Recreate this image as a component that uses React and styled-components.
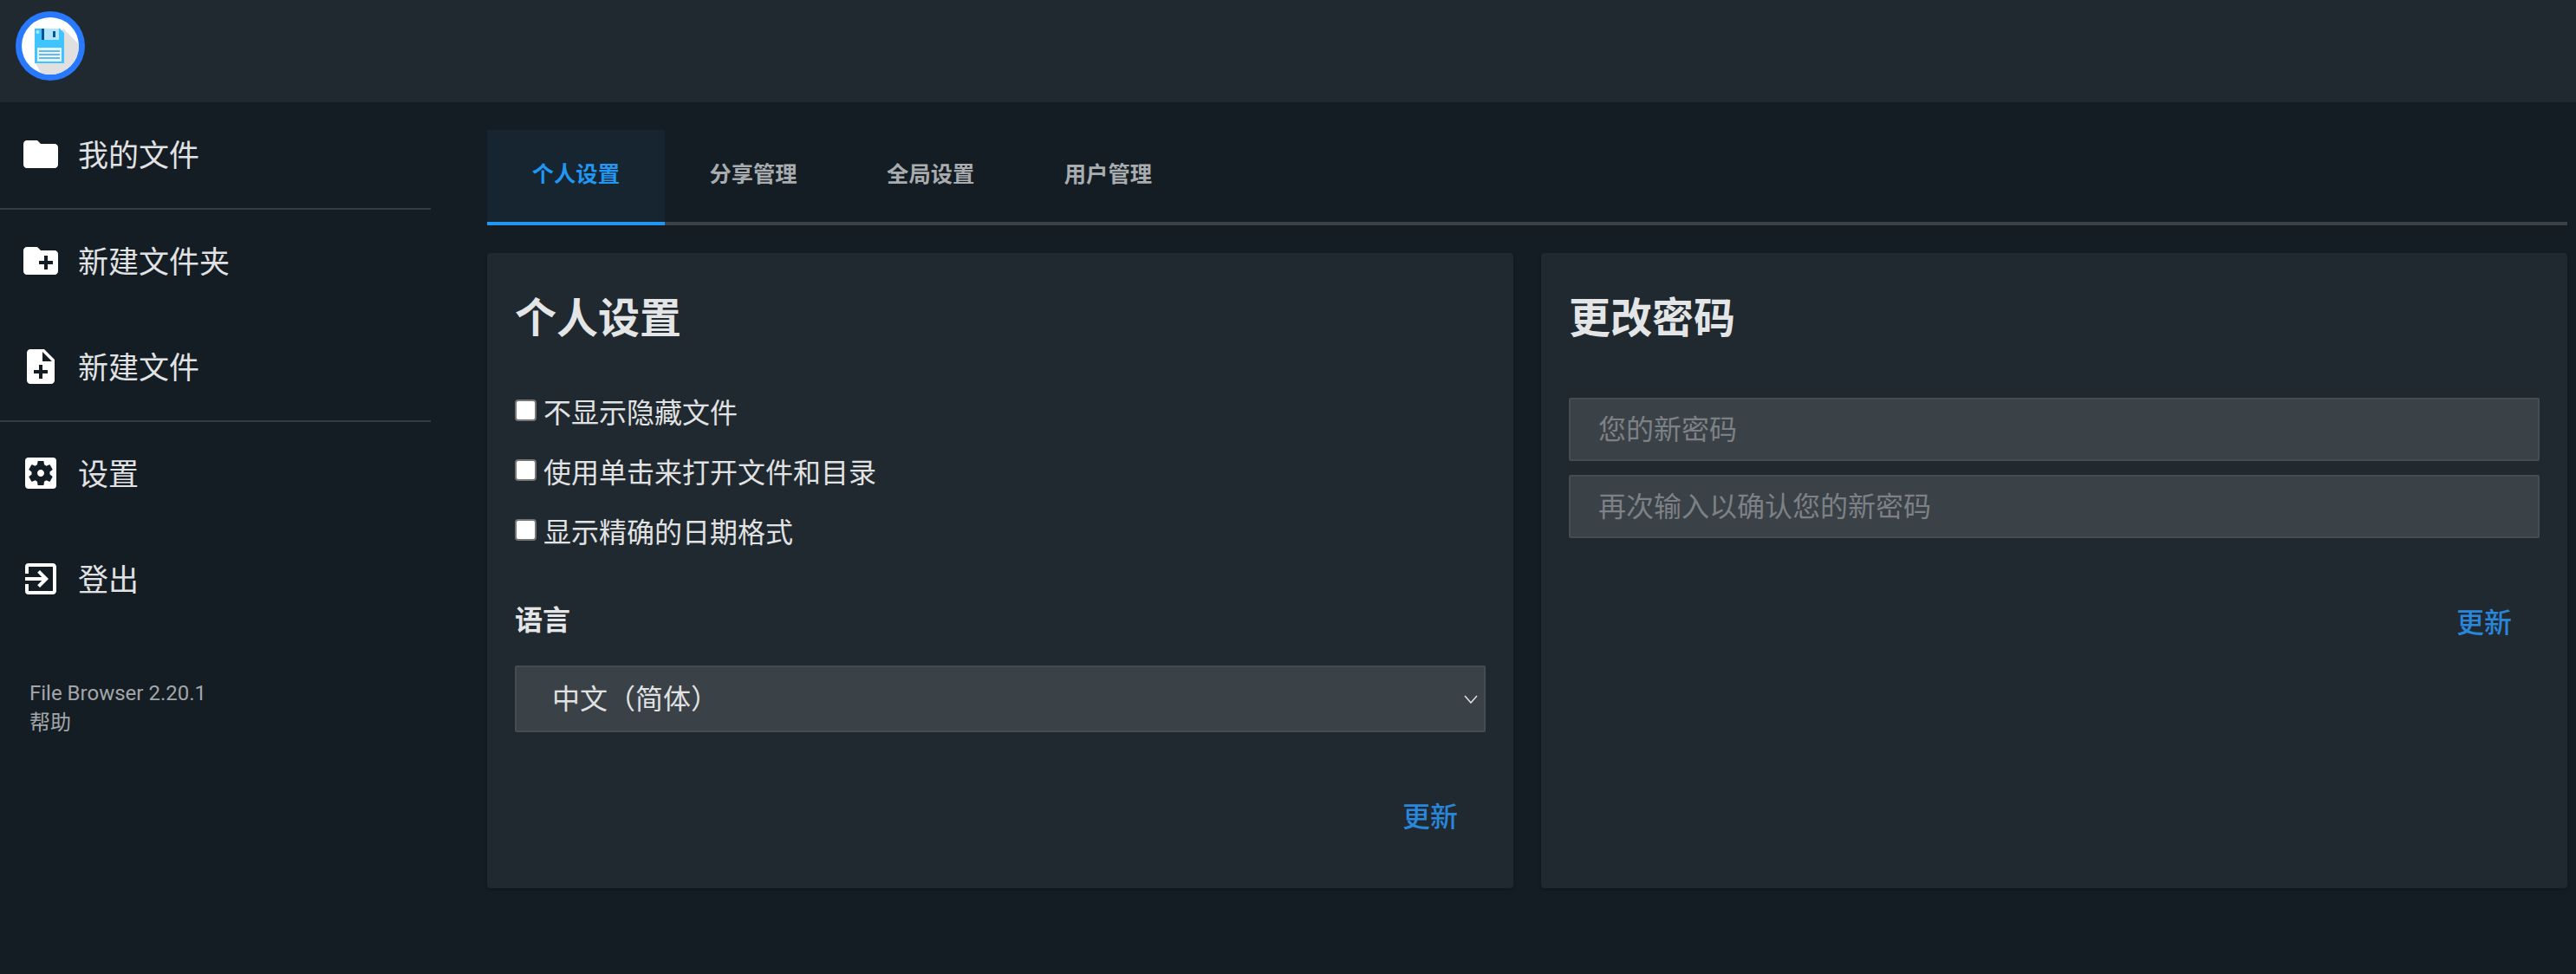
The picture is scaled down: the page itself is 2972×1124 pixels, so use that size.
import styled, { createGlobalStyle } from "styled-components";
import {
  MdFolder,
  MdCreateNewFolder,
  MdNoteAdd,
  MdSettingsApplications,
  MdExitToApp,
} from "react-icons/md";

const FONT = `Roboto, "Noto Sans CJK SC", sans-serif`;

const GlobalStyle = createGlobalStyle`
  html, body {
    margin: 0;
    background: #141d24;
    overflow: hidden;
  }
  * {
    box-sizing: border-box;
  }
`;

const Page = styled.div`
  width: 2972px;
  height: 1124px;
  background: #141d24;
  font-family: ${FONT};
  overflow: hidden;
`;

const Header = styled.header`
  height: 118px;
  background: #20292f;
  padding: 12px 0 0 17px;
`;

const Body = styled.div`
  display: flex;
`;

const Sidebar = styled.nav`
  width: 497px;
  flex-shrink: 0;
`;

const NavItem = styled.div`
  height: 122px;
  padding: 0 0 2px 23px;
  display: flex;
  align-items: center;
  gap: 19px;
  color: #e1e2e3;
  font-size: 35px;
  svg {
    flex-shrink: 0;
    color: #fff;
  }
`;

const NavLabel = styled.span`
  padding-bottom: 4px;
`;

const Divider = styled.hr`
  margin: 0 0 -1px;
  border: 0;
  height: 2px;
  background: #343b41;
`;

const Footer = styled.div`
  padding: 53px 0 0 34px;
  color: #a3a6a9;
  font-size: 24px;
  line-height: 34px;
`;

const Main = styled.main`
  flex: 1;
  padding: 32px 10px 0 65px;
`;

const Tabs = styled.div`
  display: flex;
  height: 110px;
  border-bottom: 4px solid #3a4147;
`;

const Tab = styled.div`
  width: 204.7px;
  height: 110px;
  padding-bottom: 8px;
  display: flex;
  align-items: center;
  justify-content: center;
  font-size: 25.3px;
  font-weight: 600;
  color: ${(p) => (p.$active ? "#2196f3" : "#a9acaf")};
  background: ${(p) => (p.$active ? "#16252f" : "transparent")};
  border-bottom: 4px solid ${(p) => (p.$active ? "#2196f3" : "transparent")};
`;

const Cards = styled.div`
  display: grid;
  grid-template-columns: 1fr 1fr;
  gap: 32px;
  margin-top: 32px;
`;

const Card = styled.section`
  height: 733px;
  padding: 46px 32px 51px;
  background: #20292f;
  border-radius: 4px;
  box-shadow: 0 2px 4px rgba(0, 0, 0, 0.25);
`;

const Title = styled.h2`
  margin: 0;
  height: 60px;
  line-height: 60px;
  font-size: 48px;
  font-weight: 700;
  color: #e4e5e6;
`;

const Options = styled.div`
  margin-top: 41px;
`;

const CheckRow = styled.label`
  height: 69px;
  display: flex;
  align-items: center;
  gap: 8px;
  font-size: 32px;
  color: #e1e2e3;
`;

const CheckBox = styled.input`
  appearance: none;
  width: 25px;
  height: 25px;
  margin: 0;
  background: #fff;
  border: 2px solid #767676;
  border-radius: 4px;
`;

const SectionLabel = styled.h3`
  margin: 50px 0 32px;
  height: 40px;
  line-height: 40px;
  font-size: 32px;
  font-weight: 700;
  color: #e4e5e6;
`;

const SelectWrap = styled.div`
  position: relative;
  height: 77px;
  svg {
    position: absolute;
    right: 9px;
    top: 34px;
  }
`;

const Select = styled.select`
  width: 100%;
  height: 100%;
  padding-left: 41px;
  appearance: none;
  background: #3a4147;
  border: 2px solid #454c52;
  border-radius: 2px;
  color: #e1e2e3;
  font-family: ${FONT};
  font-size: 32px;
`;

const PasswordInput = styled.input`
  display: block;
  width: 100%;
  height: 73px;
  margin-top: ${(p) => p.$gap}px;
  padding-left: 32px;
  background: #3a4147;
  border: 2px solid #454c52;
  border-radius: 2px;
  color: #e1e2e3;
  font-family: ${FONT};
  font-size: 32px;
  &::placeholder {
    color: #7d8185;
    opacity: 1;
  }
`;

const Actions = styled.div`
  display: flex;
  justify-content: flex-end;
  margin-top: 63px;
`;

const UpdateButton = styled.button`
  height: 64px;
  padding: 0 32px;
  background: none;
  border: 0;
  color: #2a86d8;
  font-family: ${FONT};
  font-size: 32px;
  font-weight: 500;
`;

const Logo = () => (
  <svg width="82" height="82" viewBox="0 0 82 82">
    <defs>
      <clipPath id="logo-inner">
        <circle cx="41" cy="41" r="33" />
      </clipPath>
    </defs>
    <circle cx="41" cy="41" r="40" fill="#2979ff" />
    <circle cx="41" cy="41" r="33" fill="#fff" />
    <path d="M56 21 L90 55 L90 90 L40 90 L24 61 Z" fill="#e0e0e0" clipPath="url(#logo-inner)" />
    <path d="M23 21 H52 L57 26 V61 H23 Z" fill="#40c4ff" />
    <rect x="34" y="21" width="17" height="13" fill="#b3e5fc" />
    <rect x="31" y="21" width="3" height="13" fill="#01579b" />
    <rect x="44" y="24" width="3" height="7" fill="#01579b" />
    <circle cx="26.5" cy="25" r="2" fill="#b3e5fc" />
    <rect x="26" y="43" width="28" height="16" fill="#e1f5fe" />
    <path d="M28 47 H52 M28 51 H52 M28 55 H52" stroke="#0277bd" strokeWidth="1" />
  </svg>
);

const Chevron = () => (
  <svg width="16" height="10" viewBox="0 0 16 10" fill="none">
    <path d="M1 1 L8 9 L15 1" stroke="#e1e2e3" strokeWidth="1.5" />
  </svg>
);

const App = () => {
  return (
    <Page>
      <GlobalStyle />
      <Header>
        <Logo />
      </Header>
      <Body>
        <Sidebar>
          <NavItem><MdFolder size={48} /><NavLabel>我的文件</NavLabel></NavItem>
          <Divider />
          <NavItem><MdCreateNewFolder size={48} /><NavLabel>新建文件夹</NavLabel></NavItem>
          <NavItem><MdNoteAdd size={48} /><NavLabel>新建文件</NavLabel></NavItem>
          <Divider />
          <NavItem><MdSettingsApplications size={48} /><NavLabel>设置</NavLabel></NavItem>
          <NavItem><MdExitToApp size={48} /><NavLabel>登出</NavLabel></NavItem>
          <Footer>
            <div>File Browser 2.20.1</div>
            <div>帮助</div>
          </Footer>
        </Sidebar>
        <Main>
          <Tabs>
            <Tab $active>个人设置</Tab>
            <Tab>分享管理</Tab>
            <Tab>全局设置</Tab>
            <Tab>用户管理</Tab>
          </Tabs>
          <Cards>
            <Card>
              <Title>个人设置</Title>
              <Options>
                <CheckRow><CheckBox type="checkbox" />不显示隐藏文件</CheckRow>
                <CheckRow><CheckBox type="checkbox" />使用单击来打开文件和目录</CheckRow>
                <CheckRow><CheckBox type="checkbox" />显示精确的日期格式</CheckRow>
              </Options>
              <SectionLabel>语言</SectionLabel>
              <SelectWrap>
                <Select defaultValue="zh-cn">
                  <option value="zh-cn">中文（简体）</option>
                </Select>
                <Chevron />
              </SelectWrap>
              <Actions>
                <UpdateButton>更新</UpdateButton>
              </Actions>
            </Card>
            <Card>
              <Title>更改密码</Title>
              <PasswordInput $gap={61} type="password" placeholder="您的新密码" />
              <PasswordInput $gap={16} type="password" placeholder="再次输入以确认您的新密码" />
              <Actions>
                <UpdateButton>更新</UpdateButton>
              </Actions>
            </Card>
          </Cards>
        </Main>
      </Body>
    </Page>
  );
};

export default App;
